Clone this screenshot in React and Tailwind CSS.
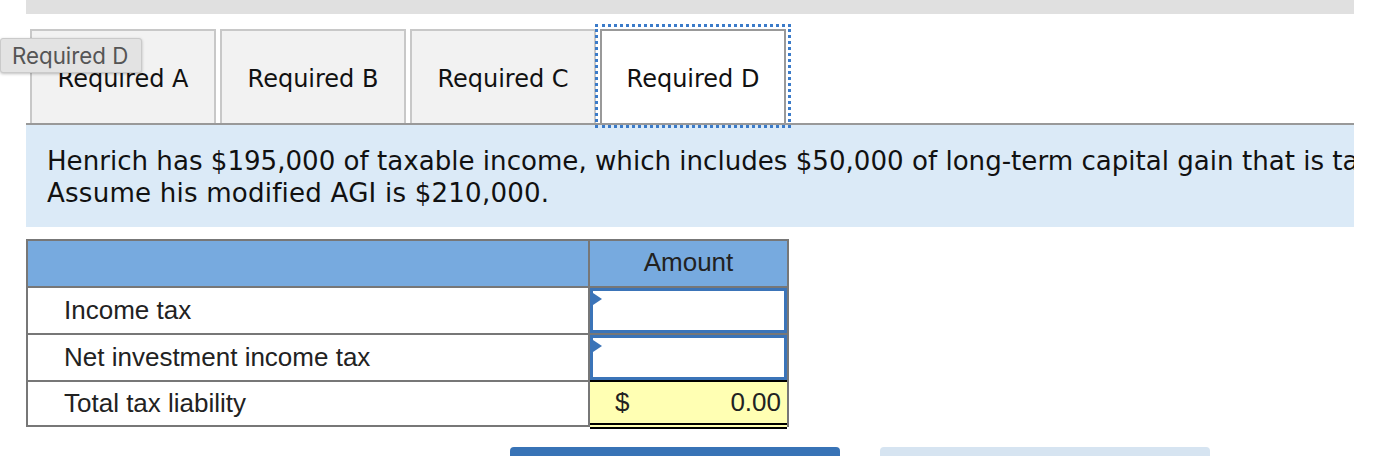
import React from "react";

const tabs = ["Required A", "Required B", "Required C", "Required D"];

const rows = ["Income tax", "Net investment income tax"];

function InputCell() {
  return (
    <div className="relative h-full w-full border-[3px] border-[#3b74b8] bg-white">
      <span className="absolute left-0 top-[2px] h-0 w-0 border-y-[6px] border-l-[9px] border-y-transparent border-l-[#3b74b8]" />
    </div>
  );
}

export default function App() {
  return (
    <div className="relative h-[456px] w-[1390px] overflow-hidden bg-white">
      <div className="ml-[26px] w-[1328px]">
        <div className="h-[14px] bg-[#e0e0e0]" />

        {/* tabs */}
        <div className="mt-[15px] flex gap-[4px] border-b-2 border-[#999] pl-[4px] font-['DejaVu_Sans',sans-serif] text-[24px] text-[#111]">
          {tabs.map((t, i) => {
            const active = i === tabs.length - 1;
            return (
              <div
                key={t}
                className={
                  active
                    ? "flex h-[94px] w-[186px] items-center justify-center border-2 border-b-0 border-[#999] bg-white pt-[4px] outline-[3px] outline-offset-[2px] outline-dotted outline-[#3b7bc9]"
                    : "flex h-[94px] w-[186px] items-center justify-center border-2 border-b-0 border-[#c8c8c8] bg-[#f2f2f2] pt-[4px]"
                }
              >
                {t}
              </div>
            );
          })}
        </div>

        {/* question text */}
        <div className="h-[102px] overflow-hidden whitespace-nowrap bg-[#dbeaf7] pl-[21px] pt-[20px] font-['DejaVu_Sans',sans-serif] text-[26.1px] leading-[32px] text-[#111]">
          <div>
            Henrich has $195,000 of taxable income, which includes $50,000 of long-term capital gain that is taxed at preferential rates.
          </div>
          <div className="tracking-[0.2px]">Assume his modified AGI is $210,000.</div>
        </div>

        {/* answer table */}
        <div className="mt-[12px] w-[763px] border-2 border-b-0 border-[#777] font-['Liberation_Sans',Arial,sans-serif] text-[26px] text-[#222]">
          <div className="flex h-[45px] bg-[#77aadf]">
            <div className="flex-1" />
            <div className="flex w-[199px] items-center justify-center border-l-2 border-[#777] pb-[3px]">
              Amount
            </div>
          </div>
          {rows.map((r) => (
            <div key={r} className="flex h-[47px] border-t-2 border-[#777]">
              <div className="flex flex-1 items-center pl-[36px]">{r}</div>
              <div className="w-[199px] border-l-2 border-[#777]">
                <InputCell />
              </div>
            </div>
          ))}
          <div className="flex h-[47px] border-t-2 border-[#777]">
            <div className="flex flex-1 items-center border-b-2 border-[#777] pl-[36px]">
              Total tax liability
            </div>
            <div className="w-[199px] border-l-2 border-[#777]">
              <div className="-mt-[2px] flex h-[49px] items-center justify-between border-t-2 border-b-[6px] border-double border-black border-t-solid bg-[#ffffb3] pl-[25px] pr-[6px]">
                <span>$</span>
                <span>0.00</span>
              </div>
            </div>
          </div>
        </div>

        {/* buttons */}
        <div className="mt-[20px] flex gap-[40px] pl-[484px]">
          <div className="h-[20px] w-[330px] rounded-t-[4px] bg-[#3873b6]" />
          <div className="h-[20px] w-[330px] rounded-t-[4px] bg-[#d6e4f1]" />
        </div>
      </div>

      {/* tooltip */}
      <div className="absolute left-0 top-[38px] flex h-[35px] w-[142px] items-center rounded-[3px] border border-[#cacaca] bg-[#e3e3e3] pl-[11px] pt-[1px] font-['Inter',sans-serif] text-[22.3px] text-[#555] shadow-[0_1px_3px_rgba(0,0,0,0.25)]">
        Required D
      </div>
    </div>
  );
}
